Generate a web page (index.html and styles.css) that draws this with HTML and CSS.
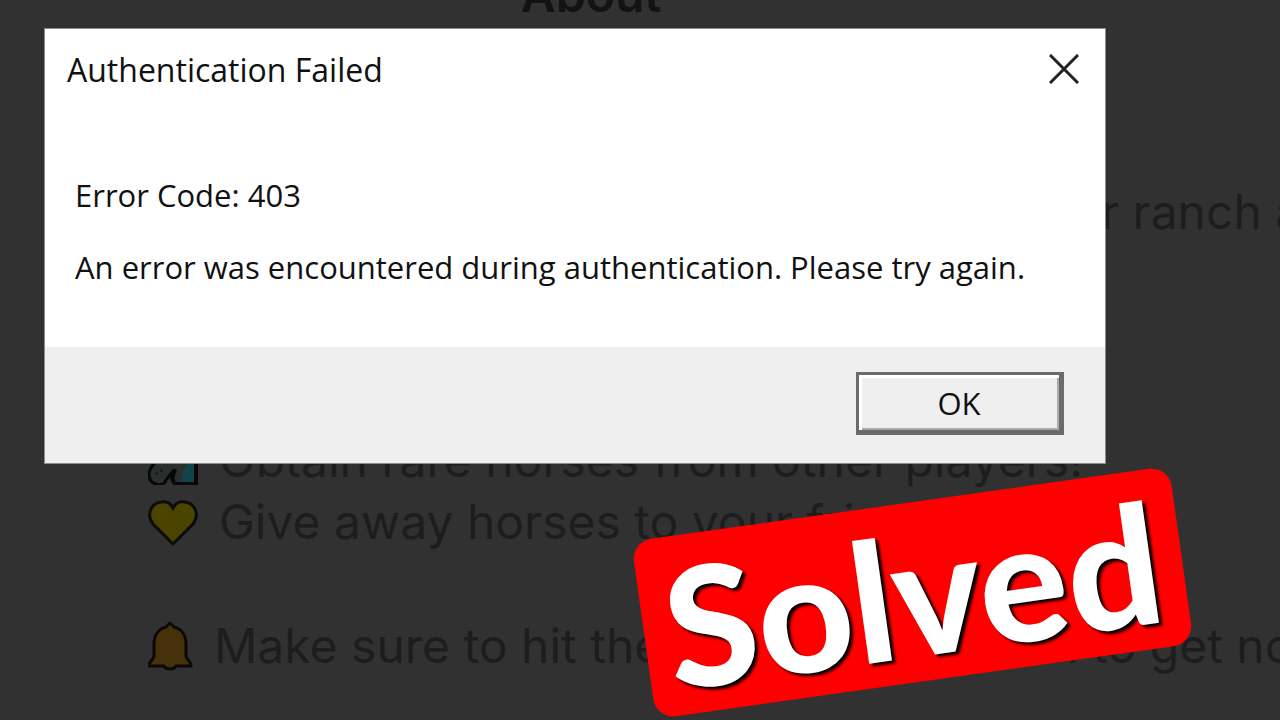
FILE: index.html
```html
<!DOCTYPE html>
<html lang="en">
<head>
    <meta charset="UTF-8">
    <meta name="viewport" content="width=device-width, initial-scale=1.0">
    <title>Authentication Failed</title>
    <link rel="stylesheet" href="styles.css">
</head>
<body>
    <main class="page">
        <h1 class="page-title">About</h1>
        <div class="description">
            <p class="line"><span class="line-end-first">r ranch a</span></p>
            <p class="line"></p>
            <p class="line"></p>
            <p class="line"></p>
            <p class="line">
                <svg class="icon" viewBox="0 0 50 50" aria-hidden="true">
                    <path d="M8 20C1 28-1 40 4 47c5 4 12 4 15-2l5-9 2 8-3 5h24V20z" fill="#2c2f30"/>
                    <path d="M38 20h9v29H31l4-5-1-7 4-4z" fill="#12434c"/>
                    <path d="M8 27C0 34-1 42 4 47c5 4 12 4 14-2l7-9" fill="none" stroke="#080808" stroke-width="3"/>
                    <path d="M27 34l-3 10 3 5h21V20" fill="none" stroke="#080808" stroke-width="4"/>
                    <path d="M8 38l2 1m3-4l1 2" stroke="#111" stroke-width="2"/>
                </svg>
                <span>Obtain rare horses from other players!</span>
            </p>
            <p class="line">
                <svg class="icon" viewBox="0 0 50 50" aria-hidden="true">
                    <path d="M25 47L5 27C-2 18 3 6 13 5c6-1 10 2 12 6 2-4 6-7 12-6 10 1 15 13 8 22z" fill="#4b4300" stroke="#0b0b08" stroke-width="3"/>
                </svg>
                <span>Give away horses to your friends!</span>
            </p>
            <p class="line"></p>
            <p class="line line-bell">
                <svg class="icon" viewBox="0 0 50 50" aria-hidden="true">
                    <path d="M22 2l4 4c8 2 12 9 12 17v12c0 3 5 5 5 10H28c-2 4-10 4-12 0H1c0-5 5-7 5-10V23C6 15 10 8 18 6z" fill="#46310b" stroke="#0b0906" stroke-width="3" stroke-linejoin="round"/>
                </svg>
                <span>Make sure to hit the</span>
                <span class="line-end-last">n to get no</span>
            </p>
        </div>
    </main>

    <div class="dialog" role="dialog" aria-labelledby="dialog-title">
        <div class="dialog-header">
            <h2 class="dialog-title" id="dialog-title">Authentication Failed</h2>
            <button class="close-button" type="button" aria-label="Close">
                <svg viewBox="0 0 30 30" aria-hidden="true">
                    <path d="M1 1l28 28M29 1L1 29" stroke="#222" stroke-width="3"/>
                </svg>
            </button>
        </div>
        <div class="dialog-body">
            <p>Error Code: 403</p>
            <p>An error was encountered during authentication. Please try again.</p>
        </div>
        <div class="dialog-footer">
            <button class="ok-button" type="button">OK</button>
        </div>
    </div>

    <div class="badge">Solved</div>
</body>
</html>
```

FILE: styles.css
```css
body {
    margin: 0;
    position: relative;
    min-height: 100vh;
    background-color: #313131;
    font-family: "Open Sans", "Noto Sans", sans-serif;
    overflow: hidden;
}

/* Dimmed page behind the dialog */
.page {
    height: 100vh;
    overflow: hidden;
    font-family: Inter, sans-serif;
    color: #1d1d1d;
}

.page-title {
    margin: -36px 98px 155px 0;
    font-size: 48px;
    font-weight: 600;
    line-height: 62px;
    text-align: center;
    color: #131313;
}

.description {
    padding-left: 148px;
}

.line {
    display: flex;
    align-items: center;
    gap: 21px;
    height: 62px;
    margin: 0;
    font-size: 48px;
    line-height: 62px;
    white-space: nowrap;
}

.line-bell {
    gap: 16px;
}

.icon {
    flex: none;
    width: 50px;
    height: 50px;
}

.line-end-first {
    margin-left: 953px;
}

.line-end-last {
    margin-left: 372px;
}

/* Message box */
.dialog {
    position: absolute;
    top: 28px;
    left: 44px;
    right: 174px;
    box-sizing: border-box;
    border: 1px solid #8c8c8c;
    background-color: #fff;
    color: #111;
}

.dialog-header {
    display: flex;
    justify-content: space-between;
    align-items: center;
    height: 80px;
    padding: 0 26px 0 22px;
}

.dialog-title {
    margin: 0;
    font-size: 32px;
    font-weight: 400;
}

.close-button {
    width: 30px;
    height: 30px;
    padding: 0;
    border: none;
    background: none;
}

.close-button svg {
    display: block;
}

.dialog-body {
    padding: 66px 30px 60px;
    font-size: 31px;
    line-height: 40px;
}

.dialog-body p {
    margin: 0 0 32px;
}

.dialog-body p:last-child {
    margin-bottom: 0;
}

.dialog-footer {
    display: flex;
    justify-content: flex-end;
    padding: 25px 41px 28px;
    background-color: #efefef;
}

.ok-button {
    width: 208px;
    height: 63px;
    padding: 0;
    border: 3px solid #6b6b6b;
    border-width: 3px 5px 5px 3px;
    background-color: #efefef;
    box-shadow: inset 3px 3px 0 #fff, inset -2px -2px 0 #aaa;
    color: #111;
    font-family: inherit;
    font-size: 31px;
}

/* Tilted label */
.badge {
    position: absolute;
    top: 503px;
    left: 641px;
    width: 543px;
    height: 179px;
    border-radius: 20px;
    background-color: #f00;
    color: #fff;
    font-family: Lato, sans-serif;
    font-size: 166px;
    font-weight: 900;
    line-height: 179px;
    text-align: center;
    text-shadow: 3px 3px 3px #000;
    transform: rotate(-8deg);
}
```
